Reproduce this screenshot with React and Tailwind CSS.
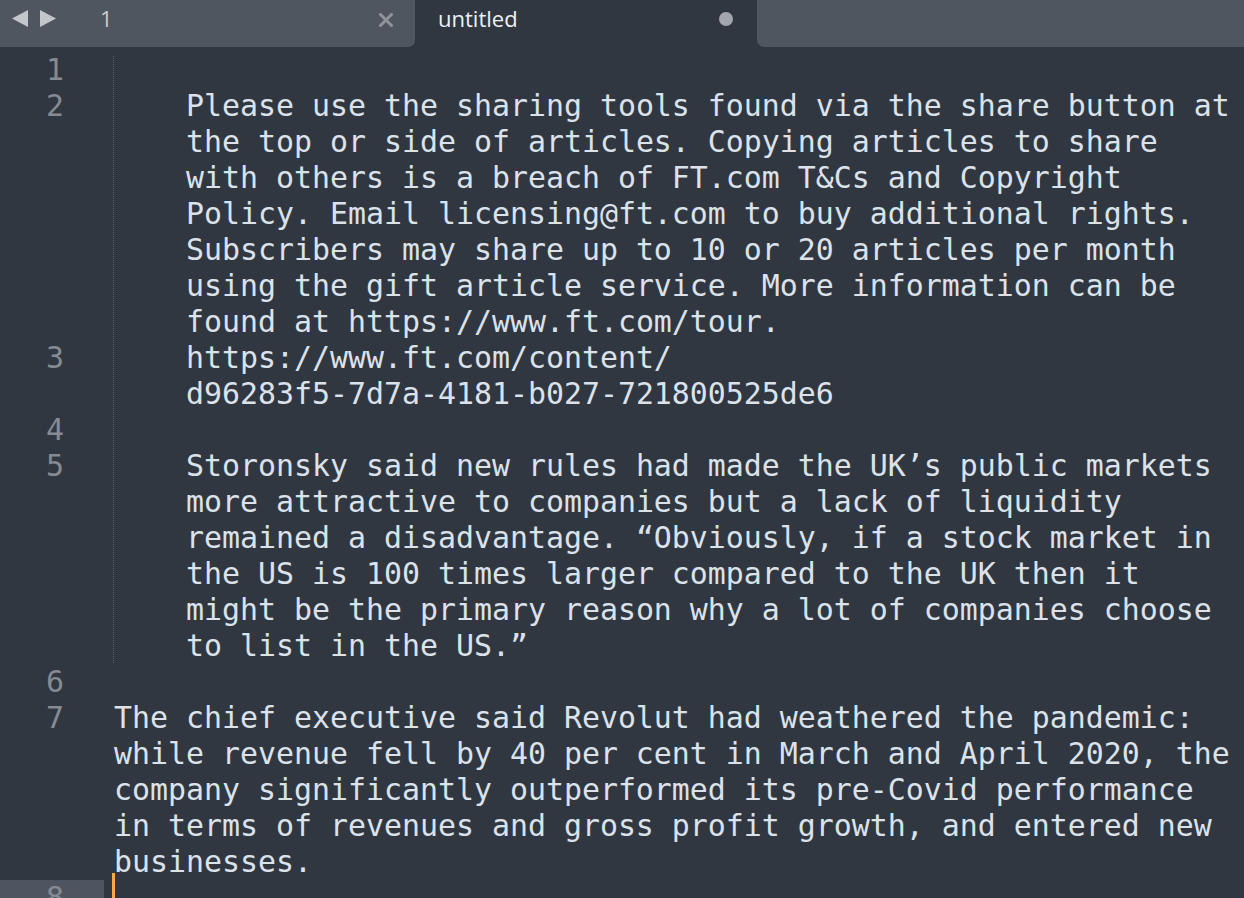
import React from "react";

const MONO = { fontFamily: '"DejaVu Sans Mono", "Liberation Mono", monospace' };
const UI = { fontFamily: '"Open Sans", "Liberation Sans", sans-serif' };

// Each document line is a list of visual rows (soft-wrapped), with its indent.
const lines = [
  { rows: [""], indent: 0 },
  {
    indent: 4,
    rows: [
      "Please use the sharing tools found via the share button at",
      "the top or side of articles. Copying articles to share",
      "with others is a breach of FT.com T&Cs and Copyright",
      "Policy. Email licensing@ft.com to buy additional rights.",
      "Subscribers may share up to 10 or 20 articles per month",
      "using the gift article service. More information can be",
      "found at https://www.ft.com/tour.",
    ],
  },
  {
    indent: 4,
    rows: ["https://www.ft.com/content/", "d96283f5-7d7a-4181-b027-721800525de6"],
  },
  { rows: [""], indent: 0 },
  {
    indent: 4,
    rows: [
      "Storonsky said new rules had made the UK’s public markets",
      "more attractive to companies but a lack of liquidity",
      "remained a disadvantage. “Obviously, if a stock market in",
      "the US is 100 times larger compared to the UK then it",
      "might be the primary reason why a lot of companies choose",
      "to list in the US.”",
    ],
  },
  { rows: [""], indent: 0 },
  {
    indent: 0,
    rows: [
      "The chief executive said Revolut had weathered the pandemic:",
      "while revenue fell by 40 per cent in March and April 2020, the",
      "company significantly outperformed its pre-Covid performance",
      "in terms of revenues and gross profit growth, and entered new",
      "businesses.",
    ],
  },
];

function NavArrows() {
  return (
    <div className="flex items-center gap-[12px] pl-[12px] pt-[10px] self-start">
      <svg width="16" height="17" viewBox="0 0 16 17">
        <path d="M16 0 L16 17 L0 8.5 Z" fill="#c3c6cb" />
      </svg>
      <svg width="16" height="17" viewBox="0 0 16 17">
        <path d="M0 0 L0 17 L16 8.5 Z" fill="#c3c6cb" />
      </svg>
    </div>
  );
}

function TabBar() {
  return (
    <div className="flex h-[47px] bg-[#313741]">
      <div className="flex w-[415px] shrink-0 rounded-br-[7px] bg-[#50565f]">
        <NavArrows />
        <div
          className="ml-[44px] h-[36px] leading-[36px] text-[22px] text-[#c9ccd1]"
          style={UI}
        >
          1
        </div>
        <div className="ml-auto mr-[22px] mt-[13px] h-[14px] w-[14px]">
          <svg width="14" height="14" viewBox="0 0 14 14">
            <path
              d="M1.5 1.5 L12.5 12.5 M12.5 1.5 L1.5 12.5"
              stroke="#8e939a"
              strokeWidth="3"
              strokeLinecap="round"
            />
          </svg>
        </div>
      </div>
      <div className="flex w-[342px] shrink-0 bg-[#313741]">
        <div
          className="ml-[23px] h-[36px] leading-[36px] text-[22px] text-[#eef0f3]"
          style={UI}
        >
          untitled
        </div>
        <div className="ml-auto mr-[24px] mt-[12px] h-[14px] w-[14px] rounded-full bg-[#a3a6ac]" />
      </div>
      <div className="flex-1 rounded-bl-[7px] bg-[#50565f]" />
    </div>
  );
}

function Row({ num, text, indent, current }) {
  return (
    <div className="flex h-[36px] leading-[36px]">
      <div
        className={`w-[104px] shrink-0 pr-[40px] text-right text-[#858a93] ${
          current ? "bg-[#4f5560]" : ""
        }`}
      >
        {num}
      </div>
      <div className="relative ml-[10px] whitespace-pre text-[#dce2ea]">
        {current && (
          <div className="absolute left-[-2px] top-[-7px] h-[40px] w-[3px] bg-[#f6a84f]" />
        )}
        {" ".repeat(indent)}
        {text}
      </div>
    </div>
  );
}

export default function App() {
  return (
    <div className="h-[898px] w-[1244px] overflow-hidden bg-[#313741]">
      <TabBar />
      <div className="relative pt-[5px] text-[29.9px]" style={MONO}>
        {/* indentation guide for the indented block */}
        <div className="absolute left-[113px] top-[9px] h-[607px] border-l border-dotted border-[#59606a]" />
        {lines.map((line, i) =>
          line.rows.map((row, j) => (
            <Row
              key={`${i}-${j}`}
              num={j === 0 ? i + 1 : ""}
              text={row}
              indent={line.indent}
            />
          ))
        )}
        <Row num={8} text="" indent={0} current />
      </div>
    </div>
  );
}
